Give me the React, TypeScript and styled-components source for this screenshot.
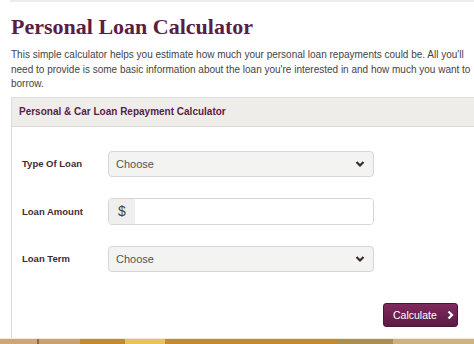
import styled, { createGlobalStyle } from 'styled-components';

const GlobalStyle = createGlobalStyle`
    html, body {
        margin: 0;
        padding: 0;
        overflow: hidden;
        background: #ffffff;
        font-family: "Liberation Sans", Arial, sans-serif;
    }
`

const stripColours = [
    { width: 37, color: '#cba77a' },
    { width: 2, color: '#8a6a40' },
    { width: 41, color: '#c9a272' },
    { width: 45, color: '#c7882e' },
    { width: 40, color: '#e6c35c' },
    { width: 172, color: '#c8882f' },
    { width: 56, color: '#a98f52' },
    { width: 81, color: '#cdb283' },
]

function Chevron() {
    return (
        <svg width="10" height="8" viewBox="0 0 10 8">
            <path d="M1.5 2 L5 5.5 L8.5 2" fill="none" stroke="#3a2a33" strokeWidth="2.2" />
        </svg>
    )
}

function ArrowRight() {
    return (
        <svg width="7" height="10" viewBox="0 0 7 10">
            <path d="M1.5 1.5 L5 5 L1.5 8.5" fill="none" stroke="#ffffff" strokeWidth="2.2" />
        </svg>
    )
}

function App() {
    return (
        <Page>
            <GlobalStyle />
            <TopRule />
            <Content>
                <Title>Personal Loan Calculator</Title>
                <Intro>
                    This simple calculator helps you estimate how much your personal loan repayments could be. All you'll need to provide is some basic information about the loan you're interested in and how much you want to borrow.
                </Intro>
                <Panel>
                    <PanelHeader>Personal &amp; Car Loan Repayment Calculator</PanelHeader>
                    <PanelBody>
                        <FieldRow>
                            <Label>Type Of Loan</Label>
                            <SelectBox>
                                <span>Choose</span>
                                <Chevron />
                            </SelectBox>
                        </FieldRow>
                        <FieldRow>
                            <Label>Loan Amount</Label>
                            <InputGroup>
                                <Addon>$</Addon>
                                <TextInput />
                            </InputGroup>
                        </FieldRow>
                        <FieldRow>
                            <Label>Loan Term</Label>
                            <SelectBox>
                                <span>Choose</span>
                                <Chevron />
                            </SelectBox>
                        </FieldRow>
                        <Actions>
                            <CalcButton>
                                Calculate
                                <ArrowRight />
                            </CalcButton>
                        </Actions>
                    </PanelBody>
                </Panel>
            </Content>
            <Strip>
                {stripColours.map((s, i) => (
                    <StripPiece key={i} style={{ width: s.width, background: s.color }} />
                ))}
            </Strip>
        </Page>
    )
}

const Page = styled.div`
    width: 474px;
    height: 344px;
    display: flex;
    flex-direction: column;
    overflow: hidden;
`

const TopRule = styled.div`
    height: 2px;
    margin-left: 10px;
    background: #ececec;
`

const Content = styled.div`
    flex: 1;
    padding-left: 11px;
    display: flex;
    flex-direction: column;
`

const Title = styled.h1`
    margin: 12px 0 0;
    font-family: "Liberation Serif", "Times New Roman", serif;
    font-size: 22px;
    font-weight: bold;
    line-height: 26px;
    color: #5a1d45;
`

const Intro = styled.p`
    margin: 8px 0 0;
    width: 464px;
    font-size: 10px;
    line-height: 14.5px;
    color: #444444;
`

const Panel = styled.div`
    margin-top: 5px;
    width: 470px;
    flex: 1;
    border: 1px solid #dcdcda;
    border-bottom: none;
    display: flex;
    flex-direction: column;
`

const PanelHeader = styled.div`
    height: 28px;
    padding-left: 7px;
    display: flex;
    align-items: center;
    background: #eeedea;
    border-bottom: 1px solid #dddbd6;
    font-size: 10px;
    font-weight: bold;
    color: #5a1d45;
`

const PanelBody = styled.div`
    padding: 24px 0 0 10px;
    display: flex;
    flex-direction: column;
    gap: 21px;
`

const FieldRow = styled.div`
    display: flex;
    align-items: center;
`

const Label = styled.div`
    width: 86px;
    font-size: 9.5px;
    font-weight: bold;
    color: #3f2b36;
`

const SelectBox = styled.div`
    width: 266px;
    height: 26px;
    box-sizing: border-box;
    padding: 0 8px 0 7px;
    display: flex;
    align-items: center;
    justify-content: space-between;
    background: #f3f3f2;
    border: 1px solid #d6d6d6;
    border-radius: 4px;
    font-size: 11px;
    color: #555555;
`

const InputGroup = styled.div`
    width: 266px;
    height: 27px;
    box-sizing: border-box;
    display: flex;
    border: 1px solid #d6d6d6;
    border-radius: 4px;
    overflow: hidden;
`

const Addon = styled.div`
    width: 26px;
    display: flex;
    align-items: center;
    justify-content: center;
    background: #efefee;
    font-size: 14px;
    color: #444444;
`

const TextInput = styled.input`
    flex: 1;
    border: none;
    outline: none;
    background: #ffffff;
`

const Actions = styled.div`
    display: flex;
    justify-content: flex-end;
    padding-right: 24px;
    margin-top: 10px;
`

const CalcButton = styled.button`
    width: 75px;
    height: 24px;
    padding: 0 0 0 9px;
    display: flex;
    align-items: center;
    gap: 10px;
    border: 1px solid #4e1238;
    border-radius: 3px;
    background: linear-gradient(#7e2a5d, #5c1a44);
    color: #ffffff;
    font-family: "Liberation Sans", Arial, sans-serif;
    font-size: 10.5px;
`

const Strip = styled.div`
    height: 5px;
    display: flex;
    border-top: 1px solid #f3ead6;
`

const StripPiece = styled.div`
    height: 100%;
    flex-shrink: 0;
`

export default App;
